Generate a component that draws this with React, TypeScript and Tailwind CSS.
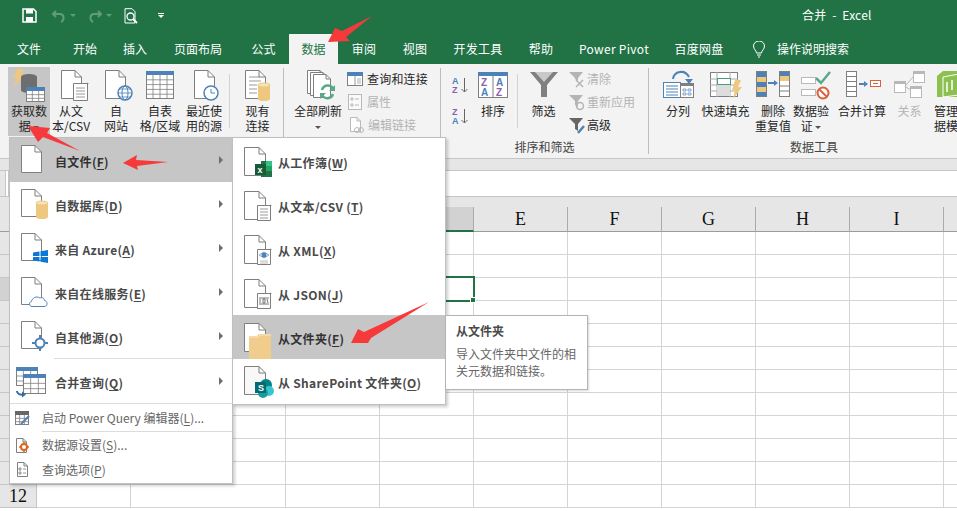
import React from "react";

const G = "#7f7f7f";
const B = "#4d82b8";
const T = "#edc87e";
const L = "#b9b9b9";

function Pg({ x, y, w, h, f = 7, c = G, fill = "#fff" }: { x: number; y: number; w: number; h: number; f?: number; c?: string; fill?: string }) {
  return (
    <g>
      <path d={`M${x + 0.5} ${y + 0.5}H${x + w - f}L${x + w - 0.5} ${y + f}V${y + h - 0.5}H${x + 0.5}Z`} fill={fill} stroke={c} />
      <path d={`M${x + w - f} ${y + 0.5}V${y + f}H${x + w - 0.5}`} fill="none" stroke={c} />
    </g>
  );
}

function Tbl({ x, y, w, h, cols, rows, head = B, c = G }: { x: number; y: number; w: number; h: number; cols: number; rows: number; head?: string; c?: string }) {
  const hh = 4;
  const v = Array.from({ length: cols - 1 }, (_, i) => x + ((i + 1) * w) / cols);
  const r = Array.from({ length: rows - 1 }, (_, i) => y + hh + ((i + 1) * (h - hh)) / rows);
  return (
    <g>
      <rect x={x + 0.5} y={y + 0.5} width={w - 1} height={h - 1} fill="#fff" stroke={c} />
      <rect x={x} y={y} width={w} height={hh} fill={head} />
      {v.map((p) => (
        <path key={p} d={`M${p} ${y + hh}V${y + h}`} stroke={c} strokeWidth="0.8" />
      ))}
      {r.map((p) => (
        <path key={p} d={`M${x} ${p}H${x + w}`} stroke={c} strokeWidth="0.8" />
      ))}
    </g>
  );
}

function Cyl({ x, y, w, h, c = T }: { x: number; y: number; w: number; h: number; c?: string }) {
  return (
    <g>
      <rect x={x} y={y + 2} width={w} height={h - 4} fill={c} />
      <ellipse cx={x + w / 2} cy={y + h - 2} rx={w / 2} ry={2} fill={c} />
      <ellipse cx={x + w / 2} cy={y + 2} rx={w / 2} ry={2} fill="#f6e3bd" stroke={c} />
    </g>
  );
}

const Ic = ({ w, h, children }: { w: number; h: number; children: React.ReactNode }) => (
  <svg width={w} height={h} viewBox={`0 0 ${w} ${h}`} className="block shrink-0">
    {children}
  </svg>
);

function Big({ className, icon, children }: { className: string; icon: React.ReactNode; children: React.ReactNode }) {
  return (
    <div className={`flex flex-col items-center shrink-0 h-[69px] mt-[3px] ${className}`}>
      <div className="h-[36px] pt-[1px] flex justify-center">{icon}</div>
      <div className="text-center leading-[15px] whitespace-nowrap">{children}</div>
    </div>
  );
}

function Small({ icon, children, off, className }: { icon: React.ReactNode; children: React.ReactNode; off?: boolean; className: string }) {
  return (
    <div className={`flex items-center h-[23px] whitespace-nowrap ${className} ${off ? "text-[#b4b4b4]" : "text-[#262626]"}`}>
      <div className="w-[18px] h-[18px] mr-[1px] shrink-0">{icon}</div>
      {children}
    </div>
  );
}

const Caret = () => <span className="inline-block align-middle w-0 h-0 border-x-[3px] border-x-transparent border-t-[3px] border-t-[#555]" />;

const SortIcon = ({ up }: { up: boolean }) => (
  <Ic w={20} h={18}>
    <text x="1" y="8" fontSize="9" fontWeight="700" fill={up ? "#4d82b8" : "#8b5fb0"} fontFamily="Liberation Sans">{up ? "A" : "Z"}</text>
    <text x="1" y="17" fontSize="9" fontWeight="700" fill={up ? "#8b5fb0" : "#4d82b8"} fontFamily="Liberation Sans">{up ? "Z" : "A"}</text>
    <path d="M13.5 2V16M10.5 13l3 3 3-3" fill="none" stroke="#666" />
  </Ic>
);

const tabs: [string, string][] = [
  ["文件", "w-[58px]"],
  ["开始", "w-[54px]"],
  ["插入", "w-[46px]"],
  ["页面布局", "w-[80px]"],
  ["公式", "w-[51px]"],
];
const tabs2: [string, string][] = [
  ["审阅", "w-[52px]"],
  ["视图", "w-[50px]"],
  ["开发工具", "w-[76px]"],
  ["帮助", "w-[50px]"],
  ["Power Pivot", "w-[96px]"],
  ["百度网盘", "w-[74px]"],
];

const heads = ["", "", "", "", "E", "F", "G", "H", "I", ""];

function Grid() {
  const rows = Array.from({ length: 12 }, (_, i) => i + 1);
  return (
    <div className="grid grid-cols-[37px_94px_155px_94px_94px_94px_94px_94px_94px_94px_94px] grid-rows-[25px] auto-rows-[23px] bg-white">
      <div className="bg-[#e6e6e6] border-r border-b border-[#9b9b9b]" />
      {heads.map((h, i) => (
        <div
          key={i}
          className={`flex items-center justify-center text-[18px] text-[#111] border-r ${i === 3 ? "bg-[#d2d2d2] border-b-2 border-b-[#217346] border-r-[#ababab]" : "bg-[#e6e6e6] border-b border-b-[#9b9b9b] border-r-[#ababab]"}`}
          style={{ fontFamily: '"Liberation Serif", serif' }}
        >
          {h}
        </div>
      ))}
      {rows.map((r) => (
        <React.Fragment key={r}>
          <div
            className={`flex items-center justify-center text-[18px] text-[#111] border-r border-b border-[#c6c6c6] ${r === 3 ? "bg-[#d2d2d2]" : "bg-[#e6e6e6]"}`}
            style={{ fontFamily: '"Liberation Serif", serif' }}
          >
            {r}
          </div>
          {heads.map((_, c) => (
            <div key={c} className="relative border-r border-b border-[#d4d4d4]">
              {r === 3 && c === 3 && (
                <div className="absolute z-10 -top-[2px] left-0 -right-[2px] -bottom-[2px] border-2 border-[#217346]">
                  <div className="absolute -right-[3px] -bottom-[3px] w-[6px] h-[6px] bg-[#217346] border border-white" />
                </div>
              )}
            </div>
          ))}
        </React.Fragment>
      ))}
    </div>
  );
}

function MItem({ icon, children, arrow, active, className }: { icon: React.ReactNode; children: React.ReactNode; arrow?: boolean; active?: boolean; className?: string }) {
  return (
    <div className={`h-[44px] flex items-center font-bold tracking-[0.3px] ${active ? "bg-[#c6c6c6] text-[#333]" : "text-[#4a4a4a]"} ${className ?? ""}`}>
      <div className="w-[45px] h-[44px] shrink-0">{icon}</div>
      <div className="pt-[4px] whitespace-nowrap">{children}</div>
      {arrow && <div className="ml-auto mr-[9px] w-0 h-0 border-y-[4px] border-y-transparent border-l-[4px] border-l-[#6e6e6e]" />}
    </div>
  );
}

const K = ({ children }: { children: React.ReactNode }) => <span className="underline underline-offset-2">{children}</span>;

function Menu1() {
  return (
    <div className="absolute z-20 left-[9px] top-[137px] w-[224px] h-[347px] bg-white border border-[#c0c0c0] shadow-[2px_2px_3px_rgba(0,0,0,0.2)] text-[#4a4a4a]">
      <MItem active arrow icon={<Ic w={45} h={44}><Pg x={11} y={7} w={21} h={28} f={7} /></Ic>}>
        自文件(<K>F</K>)
      </MItem>
      <MItem arrow icon={<Ic w={45} h={44}><Pg x={11} y={7} w={21} h={28} f={7} /><Cyl x={26} y={19} w={12} h={18} /></Ic>}>
        自数据库(<K>D</K>)
      </MItem>
      <MItem arrow icon={<Ic w={45} h={44}><Pg x={11} y={7} w={21} h={28} f={7} /><path d="M23 26.5l6.5-1V30H23zM30.5 25.3l7.5-1.2V30h-7.5zM23 31h6.5v4.5l-6.5-1zM30.5 31H38v6l-7.5-1.2z" fill="#0a78d4" /></Ic>}>
        来自 Azure(<K>A</K>)
      </MItem>
      <MItem arrow icon={<Ic w={45} h={44}><Pg x={11} y={7} w={21} h={28} f={7} /><path d="M22 36.5c-3 0-3.5-4.5-.5-5 .5-3.500 5-6 8.500-3.500 1-.5 4-1 4.500 2.500 3 .5 4 6-.5 6z" fill="#fff" stroke="#4d82b8" /></Ic>}>
        来自在线服务(<K>E</K>)
      </MItem>
      <MItem arrow icon={<Ic w={45} h={44}><Pg x={11} y={7} w={21} h={28} f={7} /><circle cx="30" cy="29" r="4.500" fill="#fff" stroke="#4d82b8" strokeWidth="2" /><path d="M30 21v4M30 33v4M22 29h4M34 29h4" stroke="#4d82b8" strokeWidth="2" /></Ic>}>
        自其他源(<K>O</K>)
      </MItem>
      <div className="h-px ml-[44px] bg-[#dcdcdc]" />
      <MItem arrow icon={<Ic w={45} h={44}><Tbl x={6} y={8} w={22} h={19} cols={3} rows={3} /><Tbl x={13} y={15} w={23} h={20} cols={3} rows={3} /><path d="M7 32c0 3 3 4 7 3.500" fill="none" stroke="#2f6fa8" strokeWidth="2" /><path d="M12 32.500l4 3-4 3z" fill="#2f6fa8" /></Ic>}>
        合并查询(<K>Q</K>)
      </MItem>
      <div className="h-px bg-[#dcdcdc]" />
      <div className="h-[27px] flex items-center text-[#666]">
        <div className="w-[32px] shrink-0 pl-[4px]">
          <Ic w={16} h={16}><Tbl x={1} y={1} w={14} h={14} cols={3} rows={3} head="#666" /><path d="M7 14l8-8" stroke="#4d82b8" strokeWidth="2" /></Ic>
        </div>
        <span className="whitespace-nowrap">启动 Power Query 编辑器(<K>L</K>)...</span>
      </div>
      <div className="h-px ml-[32px] bg-[#dcdcdc]" />
      <div className="h-[27px] pb-[1px] flex items-center text-[#666]">
        <div className="w-[32px] shrink-0 pl-[5px]">
          <Ic w={15} h={17}><Pg x={1} y={1} w={11} h={15} f={4} /><circle cx="9" cy="10" r="3" fill="#fff" stroke="#d9691e" strokeWidth="2" /><path d="M9 5v2M9 13v2M4 10h2M12 10h2" stroke="#d9691e" strokeWidth="1.500" /></Ic>
        </div>
        <span className="whitespace-nowrap">数据源设置(<K>S</K>)...</span>
      </div>
      <div className="h-[25px] pb-[3px] flex items-center text-[#666]">
        <div className="w-[32px] shrink-0 pl-[6px]">
          <Ic w={13} h={16}><Pg x={1} y={0} w={11} h={15} f={4} /><path d="M3 6h2v2H3zM3 10h2v2H3zM7 7h3M7 11h3" stroke="#777" strokeWidth="0.8" fill="none" /></Ic>
        </div>
        <span className="whitespace-nowrap">查询选项(<K>P</K>)</span>
      </div>
    </div>
  );
}

function Menu2() {
  return (
    <div className="absolute z-20 left-[232px] top-[137px] w-[214px] h-[268px] bg-white border border-[#c0c0c0] shadow-[2px_2px_3px_rgba(0,0,0,0.2)] pt-[1px]">
      <MItem icon={<Ic w={45} h={44}><Pg x={11} y={8} w={22} h={29} f={7} /><rect x="28" y="22" width="11" height="16" fill="#1f7346" /><rect x="33" y="22" width="6" height="5" fill="#33c481" /><rect x="33" y="27" width="6" height="5" fill="#21a366" /><rect x="22" y="25" width="11" height="11" fill="#185c37" /><text x="24.500" y="34" fontSize="9" fontWeight="700" fill="#fff" fontFamily="Liberation Sans">x</text></Ic>}>
        从工作簿(<K>W</K>)
      </MItem>
      <MItem icon={<Ic w={45} h={44}><Pg x={11} y={8} w={22} h={29} f={7} /><Pg x={24} y={22} w={14} h={16} f={0} /><path d="M27 26h8M27 29h8M27 32h8M27 35h8" stroke="#9a9a9a" /></Ic>}>
        从文本/CSV (<K>T</K>)
      </MItem>
      <MItem icon={<Ic w={45} h={44}><Pg x={11} y={8} w={22} h={29} f={7} /><Pg x={24} y={22} w={14} h={16} f={0} /><path d="M26 28l5-3 5 3-5 3z" fill="#fff" stroke="#8aaed0" /><circle cx="31" cy="28" r="2.500" fill="#4d82b8" /><path d="M27 34h8M27 36h8" stroke="#bbb" /></Ic>}>
        从 XML(<K>X</K>)
      </MItem>
      <MItem icon={<Ic w={45} h={44}><Pg x={11} y={8} w={22} h={29} f={7} /><Pg x={24} y={22} w={14} h={16} f={0} /><path d="M26 27h10M26 33h10" stroke="#777" /><path d="M27 28v4M30 28v4h2v-4zM34 28l1 4" stroke="#555" strokeWidth="0.8" fill="none" /></Ic>}>
        从 JSON(<K>J</K>)
      </MItem>
      <MItem active icon={<Ic w={45} h={44}><Pg x={11} y={8} w={22} h={29} f={7} /><path d="M16 21h8l2-2h12v25H16z" fill="#f0cd8c" /><path d="M16 22h9l2-2h11" fill="none" stroke="#f8e6c3" /></Ic>}>
        从文件夹(<K>F</K>)
      </MItem>
      <MItem icon={<Ic w={45} h={44}><Pg x={11} y={7} w={22} h={29} f={7} fill="#f8f8f8" /><circle cx="33" cy="26" r="6" fill="#038387" /><circle cx="36" cy="32" r="5" fill="#37c6d0" /><circle cx="30" cy="34" r="5" fill="#1a9ba1" /><rect x="22" y="23" width="11" height="11" fill="#036c70" /><text x="25" y="32" fontSize="9" fontWeight="700" fill="#fff" fontFamily="Liberation Sans">S</text></Ic>}>
        从 SharePoint 文件夹(<K>O</K>)
      </MItem>
    </div>
  );
}

export default function App() {
  return (
    <div
      className="relative w-[957px] h-[511px] overflow-hidden flex flex-col bg-white text-[12px]"
      style={{ fontFamily: '"Noto Sans CJK SC", "Noto Sans", sans-serif' }}
    >
      {/* title bar */}
      <div className="h-[31px] shrink-0 bg-[#217346] flex items-center text-white">
        <div className="ml-[22px] w-[29px]">
          <Ic w={15} h={15}><path d="M1 1h10.500L14 3.500V14H1z" fill="none" stroke="#fff" strokeWidth="1.500" /><rect x="4" y="1" width="7" height="4.500" fill="#fff" /><rect x="4" y="9" width="7" height="5" fill="#fff" /></Ic>
        </div>
        <div className="w-[36px] flex items-center gap-[3px]">
          <Ic w={16} h={14}><path d="M5 2L2 5l3 3M2 5h7c4 0 5 6 1 8" fill="none" stroke="#5f9d7d" strokeWidth="2" /></Ic>
          <span className="w-0 h-0 border-x-[3px] border-x-transparent border-t-[3px] border-t-[#5f9d7d]" />
        </div>
        <div className="w-[37px] flex items-center gap-[3px]">
          <Ic w={16} h={14}><path d="M11 2l3 3-3 3M14 5H7C3 5 2 11 6 13" fill="none" stroke="#5f9d7d" strokeWidth="2" /></Ic>
          <span className="w-0 h-0 border-x-[3px] border-x-transparent border-t-[3px] border-t-[#5f9d7d]" />
        </div>
        <div className="w-[34px]">
          <Ic w={15} h={16}><path d="M1 .7h7l3 3V15H1z" fill="none" stroke="#fff" /><circle cx="6.500" cy="8.500" r="3.500" fill="#217346" stroke="#fff" strokeWidth="1.300" /><path d="M9 11l4 4" stroke="#fff" strokeWidth="1.800" /></Ic>
        </div>
        <div className="flex flex-col items-center gap-[1px]">
          <span className="w-[6px] h-px bg-white" />
          <span className="w-0 h-0 border-x-[3px] border-x-transparent border-t-[3px] border-t-white" />
        </div>
        <div className="ml-[638px] -mt-[2px] whitespace-pre tracking-[0.2px]">合并  -  Excel</div>
      </div>
      {/* tabs */}
      <div className="h-[33px] shrink-0 bg-[#217346] flex items-end text-white">
        {tabs.map(([t, w]) => (
          <div key={t} className={`${w} h-[30px] flex items-center justify-center`}>{t}</div>
        ))}
        <div className="w-[49px] h-[30px] bg-[#f3f3f3] text-[#217346] flex items-center justify-center">数据</div>
        {tabs2.map(([t, w]) => (
          <div key={t} className={`${w} h-[30px] flex items-center justify-center tracking-[0.3px]`}>{t}</div>
        ))}
        <div className="h-[30px] ml-[16px] flex items-center">
          <Ic w={14} h={17}><path d="M4.500 12c0-2.500-3-3.500-3-7a5.500 5 0 0 1 11 0c0 3.500-3 4.500-3 7z" fill="none" stroke="#fff" /><path d="M5 14h4M6 16h2" stroke="#fff" /></Ic>
        </div>
        <div className="h-[30px] ml-[11px] flex items-center">操作说明搜索</div>
      </div>
      {/* ribbon */}
      <div className="h-[94px] shrink-0 bg-[#f3f3f3] flex overflow-hidden text-[#262626]">
        <div className="w-[8px] shrink-0" />
        {/* group 1 */}
        <Big className="w-[42px] bg-[#c6c6c6]" icon={
          <Ic w={42} h={34}>
            <path d="M9 1h7l-3 7h3L5 20l4-10H5z" fill={T} />
            <path d="M13 9c0-4 16-4 16 0v13c0 4-16 4-16 0z" fill="#6e6e6e" />
            <Tbl x={18} y={19} w={19} h={15} cols={3} rows={3} />
          </Ic>
        }>
          获取数<br />据 <Caret />
        </Big>
        <Big className="w-[42px]" icon={
          <Ic w={42} h={34}><Pg x={11} y={2} w={21} h={29} f={7} /><Pg x={23} y={15} w={15} h={18} f={0} /><path d="M26 20h9M26 23h9M26 26h9M26 29h9" stroke="#9a9a9a" /></Ic>
        }>
          从文<br />本/CSV
        </Big>
        <Big className="w-[48px]" icon={
          <Ic w={48} h={34}><Pg x={13} y={2} w={21} h={29} f={7} /><circle cx="33" cy="25" r="7" fill="#fff" stroke={B} strokeWidth="1.500" /><ellipse cx="33" cy="25" rx="3" ry="7" fill="none" stroke={B} /><path d="M26 25h14M27 21h12M27 29h12" stroke={B} strokeWidth="0.8" /></Ic>
        }>
          自<br />网站
        </Big>
        <Big className="w-[40px]" icon={
          <Ic w={40} h={34}><Tbl x={6} y={3} w={28} h={28} cols={4} rows={5} /></Ic>
        }>
          自表<br />格/区域
        </Big>
        <Big className="w-[46px] ml-[1px]" icon={
          <Ic w={46} h={34}><Pg x={13} y={2} w={21} h={29} f={7} /><circle cx="30" cy="25" r="7" fill="#fff" stroke={B} strokeWidth="1.500" /><path d="M30 21v4h4" fill="none" stroke={B} /></Ic>
        }>
          最近使<br />用的源
        </Big>
        <div className="w-px h-[54px] mt-[10px] bg-[#d2d2d2] shrink-0 ml-[2px]" />
        <Big className="w-[51px] ml-[2px]" icon={
          <Ic w={51} h={34}><Pg x={13} y={2} w={21} h={29} f={7} /><path d="M17 9h11M17 13h12M17 17h8M17 21h8M17 25h8" stroke="#9a9a9a" /><Cyl x={26} y={15} w={12} h={18} /></Ic>
        }>
          现有<br />连接
        </Big>
        <div className="w-px h-[86px] mt-[4px] bg-[#bdbdbd] shrink-0" />
        {/* group 2 */}
        <Big className="w-[64px] ml-[2px]" icon={
          <Ic w={64} h={34}>
            <Pg x={21} y={2} w={18} h={24} f={5} /><Pg x={24} y={4} w={18} h={24} f={5} /><Pg x={27} y={6} w={18} h={24} f={5} />
            <path d="M36 22a6 6 0 0 1 11-1.500M47 26a6 6 0 0 1-11 1" fill="none" stroke="#5aa889" strokeWidth="2.500" />
            <path d="M49 17v6h-6zM34 31v-6h6z" fill="#5aa889" />
          </Ic>
        }>
          全部刷新<br /><Caret />
        </Big>
        <div className="flex flex-col mt-[3px] -ml-[3px]">
          <Small className="" icon={<Ic w={17} h={18}><Tbl x={0} y={2} w={16} h={14} cols={2} rows={1} /><path d="M10 9h4M10 11h4M10 13h4" stroke="#999" strokeWidth="0.8" /></Ic>}>
            <span className="ml-[1px] tracking-[0.2px]">查询和连接</span>
          </Small>
          <Small off className="" icon={<Ic w={17} h={18}><rect x="1.500" y="1.500" width="13" height="15" fill="#fafafa" stroke={L} /><path d="M4 5h2v2H4zM4 11h2v2H4zM8 6h4M8 12h4" stroke={L} fill="none" /></Ic>}>
            <span className="ml-[1px]">属性</span>
          </Small>
          <Small off className="ml-[2px]" icon={<Ic w={17} h={18}><Pg x={1} y={1} w={11} h={15} f={4} c={L} /><circle cx="8" cy="14" r="2.500" fill="none" stroke={L} /><circle cx="12" cy="14" r="2.500" fill="none" stroke={L} /></Ic>}>
            编辑链接
          </Small>
        </div>
        <div className="w-px h-[86px] mt-[4px] bg-[#bdbdbd] shrink-0 ml-[12px]" />
        {/* group 3 */}
        <div className="w-[207px] shrink-0 flex flex-col">
          <div className="h-[74px] flex">
            <div className="w-[37px] shrink-0 pl-[10px] pt-[12px] flex flex-col gap-[13px]">
              <SortIcon up />
              <SortIcon up={false} />
            </div>
            <Big className="w-[30px]" icon={
              <Ic w={30} h={30}>
                <rect x="0.500" y="4.500" width="29" height="25" fill="#fff" stroke={G} />
                <rect x="0" y="4" width="30" height="4" fill={B} />
                <path d="M15 8v22" stroke={G} />
                <text x="3" y="18" fontSize="10" fontWeight="700" fill="#8b5fb0" fontFamily="Liberation Sans">Z</text>
                <text x="3" y="28" fontSize="10" fontWeight="700" fill={B} fontFamily="Liberation Sans">A</text>
                <text x="18" y="18" fontSize="10" fontWeight="700" fill={B} fontFamily="Liberation Sans">A</text>
                <text x="18" y="28" fontSize="10" fontWeight="700" fill="#8b5fb0" fontFamily="Liberation Sans">Z</text>
              </Ic>
            }>
              <span className="leading-[15px]">排序</span>
            </Big>
            <div className="w-px h-[54px] mt-[10px] bg-[#d2d2d2] shrink-0 ml-[9px]" />
            <Big className="w-[49px] ml-[1px]" icon={
              <Ic w={49} h={30}><path d="M11 4h28L28 17v12h-6V17z" fill="#808080" /><path d="M16 4h18l-9 10z" fill="#c9c9c9" /></Ic>
            }>
              筛选
            </Big>
            <div className="flex flex-col mt-[3px]">
              <Small off className="" icon={<Ic w={18} h={18}><path d="M1 2h14L10 8v3L7 9V8z" fill="#b4b4b4" /><path d="M8 10l7 7M15 10l-7 7" stroke="#b4b4b4" strokeWidth="1.500" /></Ic>}>清除</Small>
              <Small off className="" icon={<Ic w={18} h={18}><path d="M1 2h14L10 8v6L7 12V8z" fill="#b4b4b4" /><circle cx="12" cy="13" r="3.500" fill="none" stroke="#b4b4b4" strokeWidth="1.500" /></Ic>}>重新应用</Small>
              <Small className="" icon={<Ic w={18} h={18}><path d="M1 2h14L10 8v7L7 13V8z" fill="#666" /><path d="M10 17l6-7" stroke={B} strokeWidth="2.500" /></Ic>}>高级</Small>
            </div>
          </div>
          <div className="h-[18px] leading-[18px] text-center text-[#444]">排序和筛选</div>
        </div>
        <div className="w-px h-[86px] mt-[4px] bg-[#bdbdbd] shrink-0" />
        {/* group 4 */}
        <div className="w-[330px] shrink-0 flex flex-col">
          <div className="h-[74px] flex">
            <Big className="w-[58px]" icon={
              <Ic w={58} h={30}>
                <rect x="14.500" y="14.500" width="17" height="15" fill="#fff" stroke={B} />
                <path d="M17 18h12M17 21h12M17 24h12M17 27h12" stroke={B} />
                <rect x="31.500" y="15.500" width="13" height="14" fill="#fff" stroke={G} />
                <rect x="31" y="15" width="14" height="3" fill={G} />
                <path d="M34 21h3v2h-3zM39 21h3v2h-3zM34 25h3v2h-3zM39 25h3v2h-3z" fill="none" stroke={B} strokeWidth="0.7" />
                <path d="M24 11c1-8 12-10 16-2" fill="none" stroke={B} strokeWidth="2" />
                <path d="M36 11h8l-4 5z" fill={B} />
              </Ic>
            }>
              分列
            </Big>
            <Big className="w-[37px] shrink-0 overflow-visible" icon={
              <Ic w={37} h={30}>
                <rect x="3.500" y="4.500" width="27" height="24" fill="#fff" stroke={G} />
                <path d="M3 11h28M3 17h28M3 23h28M10 4v25M23 4v25" stroke="#aaa" />
                <rect x="10" y="17" width="13" height="11" fill="#ddd" />
                <rect x="10.500" y="10.500" width="13" height="6" fill="#fff" stroke="#4f9b78" />
                <path d="M28 12h6l-3 7h4l-9 12 2-9h-3z" fill={T} />
              </Ic>
            }>
              <span className="-mx-[8px] inline-block">快速填充</span>
            </Big>
            <Big className="w-[48px] ml-[5px]" icon={
              <Ic w={48} h={30}>
                <rect x="7.500" y="3.500" width="10" height="25" fill="#fff" stroke={G} />
                <rect x="8" y="4" width="9" height="5" fill={B} /><rect x="8" y="9" width="9" height="5" fill={T} /><rect x="8" y="14" width="9" height="5" fill={B} /><rect x="8" y="19" width="9" height="5" fill={T} /><rect x="8" y="24" width="9" height="4" fill={B} />
                <path d="M19 15h7" stroke={B} strokeWidth="2" /><path d="M25 12l4 3-4 3z" fill={B} />
                <rect x="30.500" y="3.500" width="10" height="25" fill="#fff" stroke={G} />
                <rect x="31" y="4" width="9" height="4" fill={B} /><rect x="31" y="8" width="9" height="5" fill={T} />
                <path d="M31 18h9M31 23h9" stroke={G} />
              </Ic>
            }>
              删除<br />重复值
            </Big>
            <Big className="w-[40px] -ml-[6px]" icon={
              <Ic w={40} h={32}>
                <g transform="translate(5 0)">
                  <rect x="5.500" y="9.500" width="14" height="6" fill="#fff" stroke={L} /><rect x="5.500" y="21.500" width="14" height="6" fill="#fff" stroke={L} />
                  <path d="M20 10l5 5 9-11" fill="none" stroke="#5aa889" strokeWidth="2.500" />
                  <circle cx="27" cy="25" r="5.500" fill="#fff" stroke="#d9603c" strokeWidth="2" /><path d="M23 21l8 8" stroke="#d9603c" strokeWidth="2" />
                </g>
              </Ic>
            }>
              数据验<br />证 <Caret />
            </Big>
            <Big className="w-[58px] ml-[2px]" icon={
              <Ic w={58} h={30}>
                <rect x="13.500" y="3.500" width="10" height="25" fill="#fff" stroke={G} />
                <path d="M13 8.500h10M13 13.500h10M13 18.500h10M13 23.500h10" stroke={G} />
                <path d="M26 16h6" stroke={B} strokeWidth="2" /><path d="M31 13l4 3-4 3z" fill={B} />
                <rect x="37.500" y="12.500" width="10" height="6" fill="#fff" stroke="#d9603c" /><path d="M40 15.500h5" stroke="#d9603c" />
              </Ic>
            }>
              合并计算
            </Big>
            <Big className="w-[37px] text-[#b4b4b4]" icon={
              <Ic w={37} h={30}>
                <rect x="3.500" y="13.500" width="11" height="11" fill="#fff" stroke={L} /><rect x="3" y="13" width="12" height="3" fill={L} />
                <rect x="22.500" y="3.500" width="11" height="11" fill="#fff" stroke={L} /><rect x="22" y="3" width="12" height="3" fill={L} />
                <rect x="19.500" y="18.500" width="11" height="11" fill="#fff" stroke={L} /><rect x="19" y="18" width="12" height="3" fill={L} />
                <path d="M15 17l7-8M15 19l5 3" stroke={L} />
              </Ic>
            }>
              关系
            </Big>
            <Big className="w-[36px] ml-[6px] items-start" icon={
              <Ic w={36} h={32}>
                <path d="M3 8l6-5h14a8 8 0 0 1 8 8v18H3z" fill="#8cc152" />
                <path d="M9 9l16-3v21l-16 2z" fill="none" stroke="#fff" />
                <path d="M13 14v10M18 12v10" stroke="#fff" strokeWidth="1.500" />
              </Ic>
            }>
              <div className="text-left">管理数<br />据模型</div>
            </Big>
          </div>
          <div className="h-[18px] leading-[18px] text-[#444] text-center">数据工具</div>
        </div>
      </div>
      {/* formula area */}
      <div className="h-[12px] shrink-0 bg-[#e6e6e6] border-t border-[#c6c6c6]" />
      <div className="h-[27px] shrink-0 bg-white border-y border-[#c6c6c6] flex">
        <div className="w-[5px] bg-[#e6e6e6]" />
        <div className="w-[4px] border-x border-[#c6c6c6]" />
      </div>
      <div className="h-[10px] shrink-0 bg-[#e6e6e6]" />
      <Grid />

      <Menu1 />
      <Menu2 />

      {/* tooltip */}
      <div className="absolute z-20 left-[445px] top-[315px] w-[143px] h-[75px] bg-white border border-[#b4b4b4] shadow-[1px_1px_2px_rgba(0,0,0,0.15)] pl-[10px] pt-[6px] text-[#666]">
        <div className="font-bold text-[#4a4a4a] leading-[18px] mb-[5px]">从文件夹</div>
        <div className="leading-[17px] whitespace-nowrap">导入文件夹中文件的相<br />关元数据和链接。</div>
      </div>

      {/* annotation arrows */}
      <svg width="957" height="511" viewBox="0 0 957 511" className="absolute z-30 inset-0 pointer-events-none">
        <polygon points="328,42 335,28 342,31 372,16 346,37 350,41" fill="#f6393a" />
        <polygon points="28,126 50,128 47,133 80,151 43,137 38,142" fill="#f6393a" />
        <polygon points="123,163 137,155 136,160 168,162 137,166 138,170" fill="#f6393a" />
        <polygon points="351,343 358,329 364,332 429,302 371,338 368,343" fill="#f6393a" />
      </svg>
    </div>
  );
}
